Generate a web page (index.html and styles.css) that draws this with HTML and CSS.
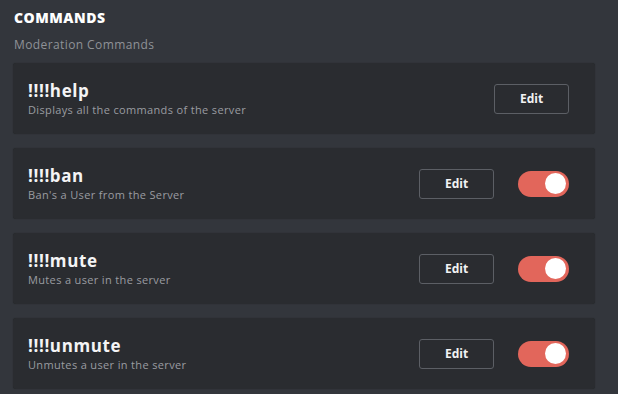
FILE: index.html
```html
<!DOCTYPE html>
<html>
<head>
<meta charset="utf-8">
<link rel="stylesheet" href="styles.css">
</head>
<body>
<div class="page">
  <h1 class="title">COMMANDS</h1>
  <div class="subtitle">Moderation Commands</div>
  <div class="list">
    <div class="card">
      <div class="info">
        <div class="name">!!!!help</div>
        <div class="desc">Displays all the commands of the server</div>
      </div>
      <div class="actions">
        <button class="edit">Edit</button>
      </div>
    </div>
    <div class="card">
      <div class="info">
        <div class="name">!!!!ban</div>
        <div class="desc">Ban's a User from the Server</div>
      </div>
      <div class="actions">
        <button class="edit">Edit</button>
        <span class="toggle"><span class="knob"></span></span>
      </div>
    </div>
    <div class="card">
      <div class="info">
        <div class="name">!!!!mute</div>
        <div class="desc">Mutes a user in the server</div>
      </div>
      <div class="actions">
        <button class="edit">Edit</button>
        <span class="toggle"><span class="knob"></span></span>
      </div>
    </div>
    <div class="card">
      <div class="info">
        <div class="name">!!!!unmute</div>
        <div class="desc">Unmutes a user in the server</div>
      </div>
      <div class="actions">
        <button class="edit">Edit</button>
        <span class="toggle"><span class="knob"></span></span>
      </div>
    </div>
  </div>
</div>
</body>
</html>
```
FILE: styles.css
```css
html, body {
  margin: 0;
  padding: 0;
  background: #33363c;
}
body {
  font-family: "Open Sans", "DejaVu Sans", sans-serif;
  color: #ffffff;
  width: 618px;
  height: 394px;
  overflow: hidden;
}
.page {
  padding: 9px 23px 0 13px;
}
.title {
  margin: 0 0 0 1px;
  font-size: 14px;
  font-weight: 800;
  line-height: 18px;
  letter-spacing: 0.5px;
}
.subtitle {
  margin: 10px 0 0 1px;
  font-size: 12px;
  line-height: 16px;
  letter-spacing: 0.4px;
  color: #8f9297;
}
.list {
  margin-top: 10px;
  display: flex;
  flex-direction: column;
  gap: 14px;
}
.card {
  height: 71px;
  box-sizing: border-box;
  background: #2a2c30;
  border-radius: 3px;
  display: flex;
  align-items: center;
  justify-content: space-between;
  padding: 0 26px 0 15px;
  box-shadow: 0 0 1px rgba(0,0,0,0.4);
}
.info {
  display: flex;
  flex-direction: column;
}
.name {
  font-size: 17px;
  font-weight: 700;
  line-height: 20px;
  letter-spacing: 0.6px;
  color: #f4f4f5;
}
.desc {
  font-size: 11px;
  line-height: 15px;
  letter-spacing: 0.35px;
  color: #9a9ca1;
  margin-top: 1px;
}
.actions {
  display: flex;
  align-items: center;
  gap: 24px;
}
.edit {
  width: 75px;
  height: 30px;
  background: transparent;
  border: 1px solid #5c5f65;
  border-radius: 3px;
  color: #f2f2f3;
  font-family: "Open Sans", "DejaVu Sans", sans-serif;
  font-size: 12px;
  font-weight: 700;
  padding: 0;
}
.toggle {
  width: 51px;
  height: 26px;
  border-radius: 13px;
  background: #e2665b;
  display: flex;
  align-items: center;
  justify-content: flex-end;
  padding: 0 3px;
  box-sizing: border-box;
}
.knob {
  width: 21px;
  height: 21px;
  border-radius: 50%;
  background: #ffffff;
}
```
